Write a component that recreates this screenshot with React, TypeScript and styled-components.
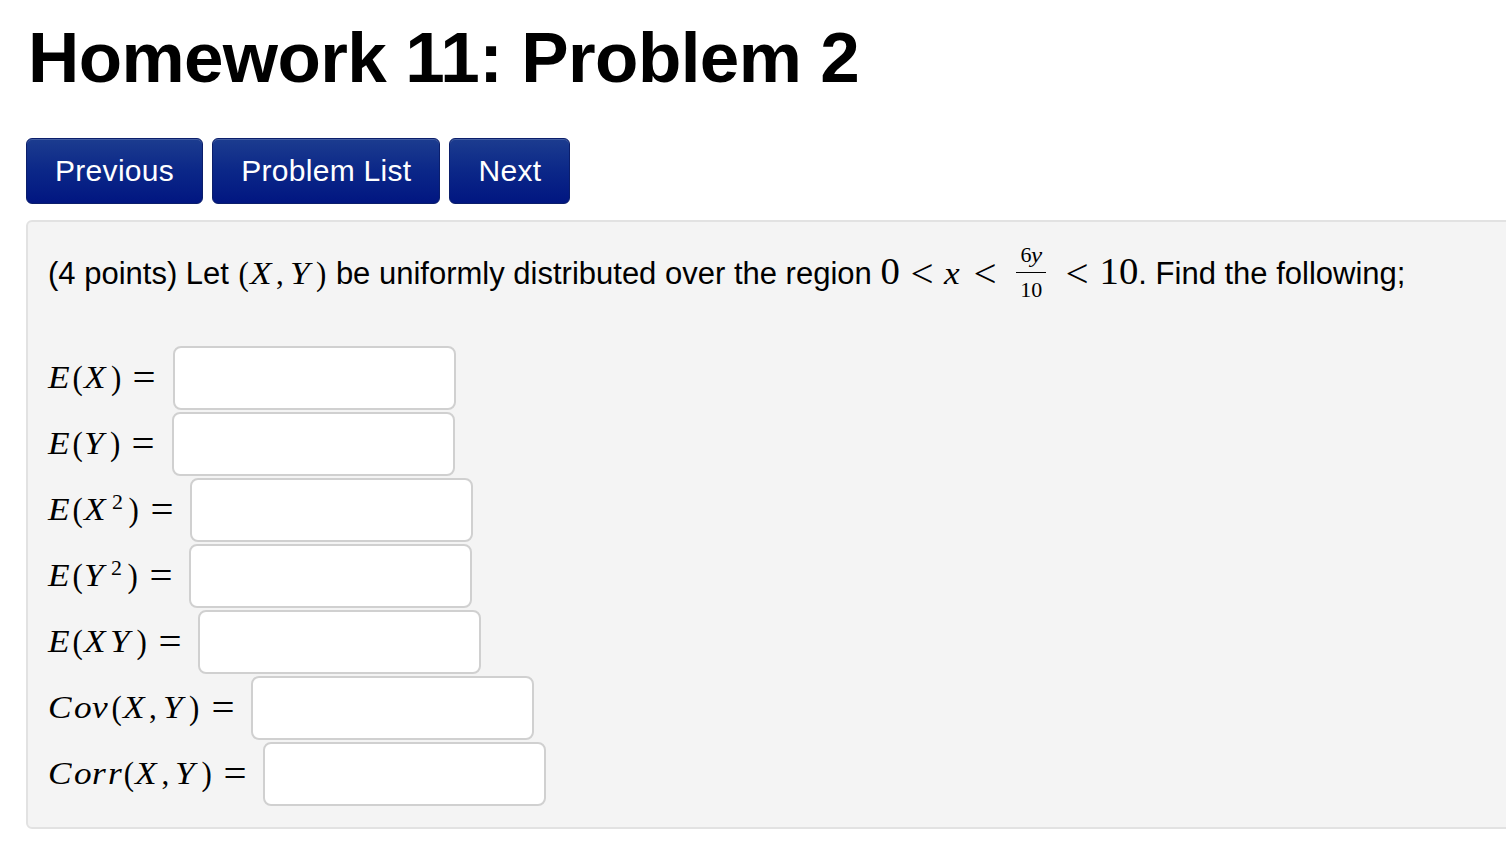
import React from "react";
import styled, { createGlobalStyle } from "styled-components";

const GlobalStyle = createGlobalStyle`
  html, body {
    margin: 0;
    padding: 0;
    background: #ffffff;
    overflow: hidden;
  }
  body {
    font-family: "Liberation Sans", Arial, Helvetica, sans-serif;
    color: #000000;
  }
`;

const Page = styled.div`
  padding: 22px 0 0 26px;
`;

const Title = styled.h1`
  margin: 0 0 0 2px;
  font-size: 71px;
  line-height: 71px;
  font-weight: 700;
  letter-spacing: -0.6px;
`;

const NavBar = styled.nav`
  display: flex;
  gap: 9px;
  margin-top: 45px;
`;

const NavButton = styled.button`
  height: 66px;
  padding: 0 28px;
  border: 1px solid #0b1e6b;
  border-radius: 6px;
  background: linear-gradient(to bottom, #1c3c8f 0%, #0b2788 50%, #011681 100%);
  color: #ffffff;
  font-family: inherit;
  font-size: 30px;
  letter-spacing: 0.3px;
  line-height: 1;
  box-shadow: inset 0 1px 0 rgba(255, 255, 255, 0.18);
  cursor: pointer;
`;

const Panel = styled.section`
  margin-top: 16px;
  margin-right: -20px;
  background: #f4f4f4;
  border: 2px solid #e2e2e2;
  border-radius: 6px;
  padding: 22px 20px 21px 20px;
`;

const Statement = styled.p`
  margin: 0;
  font-size: 31px;
  line-height: 40px;
`;

const M = styled.span`
  font-family: "Liberation Serif", "Times New Roman", serif;
  font-size: 31px;
  white-space: nowrap;
`;

const V = styled.span<{ $w: number }>`
  display: inline-block;
  width: ${(p) => p.$w}em;
  font-style: italic;
  transform: scaleX(1.14);
  transform-origin: 0 50%;
`;

const Paren = styled.span`
  display: inline-block;
  width: 0.389em;
  text-align: center;
  transform: scaleY(1.08);
`;

const Comma = styled.span`
  display: inline-block;
  width: 0.278em;
  margin-right: 0.167em;
`;

const Digits = styled.span`
  font-size: 1.25em;
  line-height: 0;
`;

const Rel = styled.span`
  display: inline-block;
  width: 0.778em;
  margin: 0 0.33em;
  text-align: center;
  transform: scale(1.32);
`;

const Sup = styled.sup`
  font-size: 0.707em;
  vertical-align: 0.5em;
  line-height: 0;
  margin: 0 0.22em 0 0.08em;
`;

const Frac = styled.span`
  display: inline-flex;
  flex-direction: column;
  align-items: center;
  vertical-align: 22px;
  font-size: 22px;
  line-height: 22px;
  margin: 0 0.4em;
`;

const Num = styled.span`
  padding: 0 4px 6px;
`;

const Den = styled.span`
  align-self: stretch;
  text-align: center;
  border-top: 1.5px solid #000;
  padding: 6px 4px 0;
`;

const Answers = styled.div`
  display: flex;
  flex-direction: column;
  gap: 2px;
  margin-top: 45px;
`;

const Row = styled.div`
  display: flex;
  align-items: center;
`;

const Blank = styled.input`
  box-sizing: border-box;
  width: 283px;
  height: 64px;
  margin-left: 6px;
  border: 2px solid #d0d0d0;
  border-radius: 8px;
  background: #ffffff;
  font-size: 28px;
  padding: 0 10px;
  outline: none;
`;

const W: Record<string, number> = {
  E: 0.764,
  X: 0.852,
  Y: 0.82,
  C: 0.84,
  o: 0.58,
  v: 0.6,
  r: 0.5,
  x: 0.6,
  y: 0.49,
};

const Var = ({ c }: { c: string }) => <V $w={W[c]}>{c}</V>;

const XY = () => (
  <>
    <Paren>(</Paren>
    <Var c="X" />
    <Comma>,</Comma>
    <Var c="Y" />
    <Paren>)</Paren>
  </>
);

const rows: { key: string; label: React.ReactNode }[] = [
  {
    key: "ex",
    label: (
      <>
        <Var c="E" />
        <Paren>(</Paren>
        <Var c="X" />
        <Paren>)</Paren>
      </>
    ),
  },
  {
    key: "ey",
    label: (
      <>
        <Var c="E" />
        <Paren>(</Paren>
        <Var c="Y" />
        <Paren>)</Paren>
      </>
    ),
  },
  {
    key: "ex2",
    label: (
      <>
        <Var c="E" />
        <Paren>(</Paren>
        <Var c="X" />
        <Sup>2</Sup>
        <Paren>)</Paren>
      </>
    ),
  },
  {
    key: "ey2",
    label: (
      <>
        <Var c="E" />
        <Paren>(</Paren>
        <Var c="Y" />
        <Sup>2</Sup>
        <Paren>)</Paren>
      </>
    ),
  },
  {
    key: "exy",
    label: (
      <>
        <Var c="E" />
        <Paren>(</Paren>
        <Var c="X" />
        <Var c="Y" />
        <Paren>)</Paren>
      </>
    ),
  },
  {
    key: "cov",
    label: (
      <>
        <Var c="C" />
        <Var c="o" />
        <Var c="v" />
        <XY />
      </>
    ),
  },
  {
    key: "corr",
    label: (
      <>
        <Var c="C" />
        <Var c="o" />
        <Var c="r" />
        <Var c="r" />
        <XY />
      </>
    ),
  },
];

export default function App() {
  return (
    <>
      <GlobalStyle />
      <Page>
        <Title>Homework 11: Problem 2</Title>
        <NavBar>
          <NavButton>Previous</NavButton>
          <NavButton>Problem List</NavButton>
          <NavButton>Next</NavButton>
        </NavBar>
        <Panel>
          <Statement>
            (4 points) Let{" "}
            <M>
              <XY />
            </M>{" "}
            be uniformly distributed over the region{" "}
            <M>
              <Digits>0</Digits>
              <Rel>&lt;</Rel>
              <Var c="x" />
              <Rel>&lt;</Rel>
              <Frac>
                <Num>
                  6<V $w={0.49}>y</V>
                </Num>
                <Den>10</Den>
              </Frac>
              <Rel>&lt;</Rel>
              <Digits>10</Digits>
            </M>
            . Find the following;
          </Statement>
          <Answers>
            {rows.map((r) => (
              <Row key={r.key}>
                <M>
                  {r.label}
                  <Rel>=</Rel>
                </M>
                <Blank type="text" aria-label={r.key} />
              </Row>
            ))}
          </Answers>
        </Panel>
      </Page>
    </>
  );
}
